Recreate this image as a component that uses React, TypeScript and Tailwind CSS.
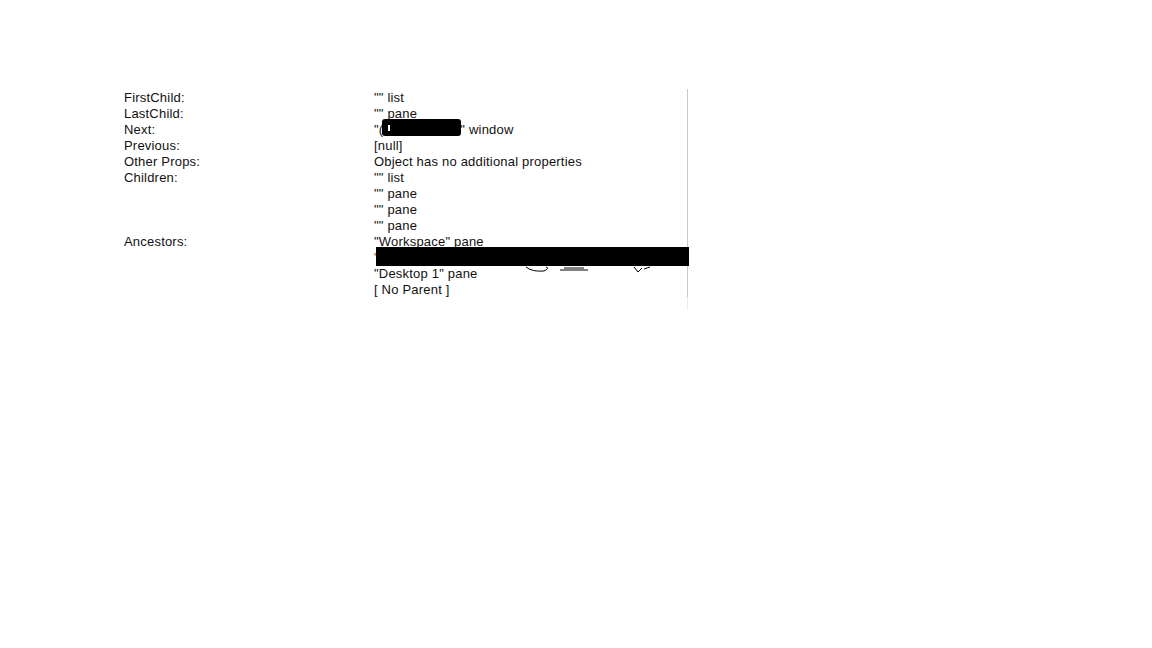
import React from "react";

const rows: { label: string; values: React.ReactNode[] }[] = [
  { label: "FirstChild:", values: ['"" list'] },
  { label: "LastChild:", values: ['"" pane'] },
  {
    label: "Next:",
    values: [
      <span className="relative">
        "(
        <span className="absolute left-[8px] top-[-3px] h-[17px] w-[79px] rounded-[3px] bg-black">
          <span className="absolute left-[6px] top-[6px] h-[6px] w-[2px] bg-white"></span>
        </span>
        <span className="inline-block w-[77px]"></span>" window
      </span>,
    ],
  },
  { label: "Previous:", values: ["[null]"] },
  { label: "Other Props:", values: ["Object has no additional properties"] },
  { label: "Children:", values: ['"" list', '"" pane', '"" pane', '"" pane'] },
  {
    label: "Ancestors:",
    values: [
      '"Workspace" pane',
      <span className="relative block h-4">
        <span className="text-[#b05a00]">"</span>
        <span className="absolute left-[2px] top-[-3px] h-[19px] w-[313px] bg-black"></span>
        <svg className="absolute left-[150px] top-[16px]" width="140" height="8" viewBox="0 0 140 8">
          <path d="M2 1 Q8 6 20 5 Q26 2 22 1 M36 4 L64 4 M40 2 L60 2 M110 1 L114 6 L118 2 M120 3 L126 1" stroke="#000" strokeWidth="1" fill="none" />
        </svg>
      </span>,
      '"Desktop 1" pane',
      "[ No Parent ]",
    ],
  },
];

export default function App() {
  return (
    <div className="min-h-[648px] w-[1152px] bg-white pl-[124px] pt-[90px] font-['Liberation_Sans',Arial,sans-serif] text-[13px] leading-4 tracking-[0.2px] text-[#111]">
      <div className="-mt-px flex w-[564px]">
        <div className="w-[250px] pt-px">
          {rows.map((r) => (
            <div key={r.label}>
              <div className="h-4">{r.label}</div>
              {r.values.slice(1).map((_, i) => (
                <div key={i} className="h-4"></div>
              ))}
            </div>
          ))}
        </div>
        <div className="w-[313px] pb-3 pt-px">
          {rows.map((r) =>
            r.values.map((v, i) => (
              <div key={r.label + i} className="h-4 whitespace-nowrap">
                {v}
              </div>
            ))
          )}
        </div>
        <div className="flex w-px flex-col">
          <div className="h-[208px] bg-[#c8c8c8]"></div>
          <div className="flex-1 bg-[#ececec]"></div>
        </div>
      </div>
    </div>
  );
}
